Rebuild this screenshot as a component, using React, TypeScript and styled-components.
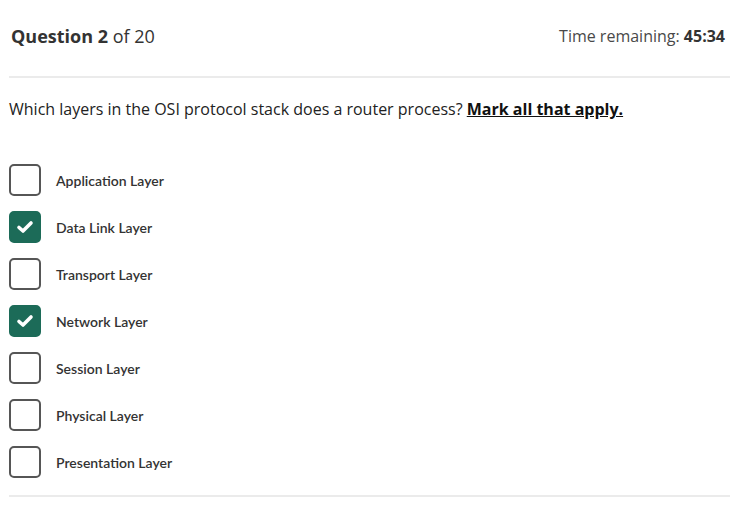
import styled, { createGlobalStyle } from "styled-components";

const GlobalStyle = createGlobalStyle`
  body {
    margin: 0;
    background: #fff;
    font-family: "Open Sans", "Liberation Sans", sans-serif;
    color: #333;
  }
`;

const options = [
  { label: "Application Layer", checked: false },
  { label: "Data Link Layer", checked: true },
  { label: "Transport Layer", checked: false },
  { label: "Network Layer", checked: true },
  { label: "Session Layer", checked: false },
  { label: "Physical Layer", checked: false },
  { label: "Presentation Layer", checked: false },
];

export default function App() {
  return (
    <>
      <GlobalStyle />
      <Page>
        <Header>
          <Title>
            <strong>Question 2</strong> of 20
          </Title>
          <Timer>
            Time remaining: <strong>45:34</strong>
          </Timer>
        </Header>
        <Prompt>
          Which layers in the OSI protocol stack does a router process?{" "}
          <Emphasis>Mark all that apply.</Emphasis>
        </Prompt>
        <OptionList>
          {options.map((option) => (
            <Option key={option.label}>
              <Box $checked={option.checked}>
                {option.checked && (
                  <svg width="18" height="18" viewBox="0 0 18 18">
                    <polyline
                      points="3,9.5 7,13 15,5"
                      fill="none"
                      stroke="#fff"
                      strokeWidth="3.6"
                      strokeLinecap="round"
                      strokeLinejoin="round"
                    />
                  </svg>
                )}
              </Box>
              <Label>{option.label}</Label>
            </Option>
          ))}
        </OptionList>
      </Page>
    </>
  );
}

const Page = styled.div`
  padding-left: 9px;
`;

const Header = styled.header`
  display: flex;
  justify-content: space-between;
  align-items: center;
  height: 78px;
  padding: 0 5px 4px 2px;
  box-sizing: border-box;
  border-bottom: 2px solid #ebebeb;
`;

const Title = styled.h1`
  margin: 0;
  font-size: 18px;
  font-weight: 400;
  color: #333;

  strong {
    font-weight: 700;
  }
`;

const Timer = styled.div`
  font-size: 16px;
  color: #494949;

  strong {
    font-weight: 700;
    color: #333;
  }
`;

const Prompt = styled.p`
  margin: 19px 0 0;
  font-size: 16px;
  line-height: 24px;
  color: #222;
`;

const Emphasis = styled.span`
  font-weight: 700;
  text-decoration: underline;
  color: #111;
`;

const OptionList = styled.div`
  display: flex;
  flex-direction: column;
  gap: 15px;
  margin-top: 43px;
  padding-bottom: 17px;
  border-bottom: 2px solid #ebebeb;
`;

const Option = styled.label`
  display: flex;
  align-items: center;
  gap: 15px;
`;

const Box = styled.span<{ $checked: boolean }>`
  width: 32px;
  height: 32px;
  box-sizing: border-box;
  border-radius: 5px;
  border: 2px solid ${(p) => (p.$checked ? "#1c6b58" : "#565656")};
  background: ${(p) => (p.$checked ? "#1c6b58" : "#fff")};
  display: flex;
  align-items: center;
  justify-content: center;
`;

const Label = styled.span`
  font-family: Lato, "Liberation Sans", sans-serif;
  font-size: 14px;
  font-weight: 600;
  color: #333;
`;
